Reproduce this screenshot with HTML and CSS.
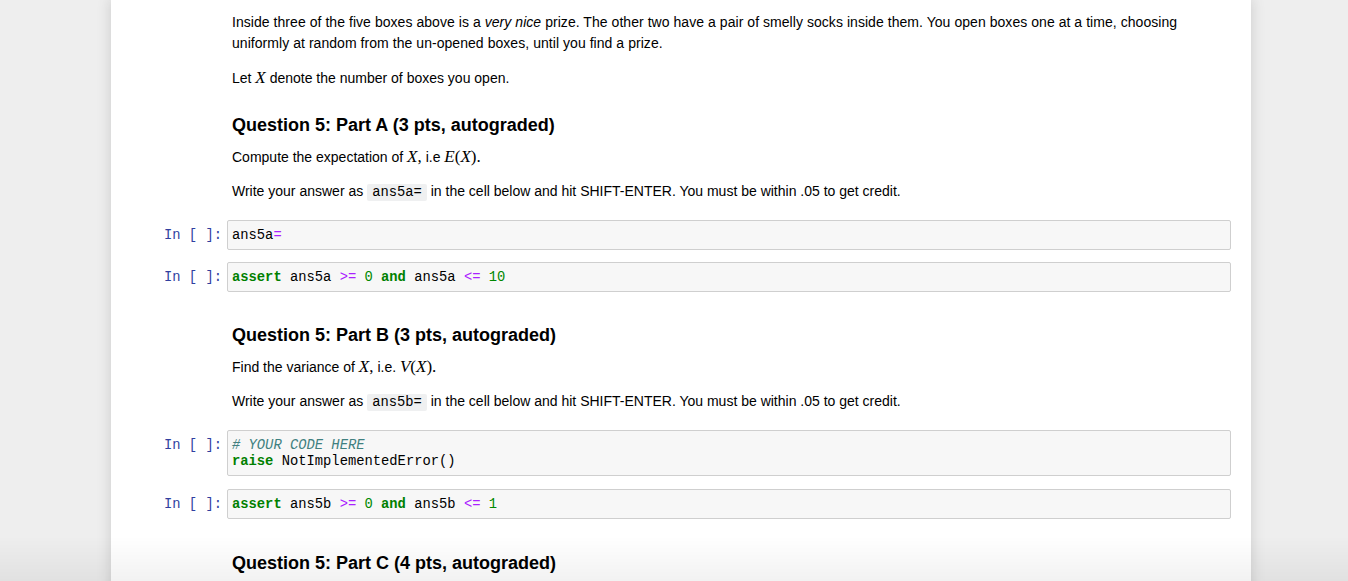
FILE: index.html
```html
<!DOCTYPE html>
<html>
<head>
<meta charset="utf-8">
<link rel="stylesheet" href="styles.css">
</head>
<body>
<div class="notebook">
  <div class="cell md first">
    <div class="prompt"></div>
    <div class="md-body">
      <p class="intro">Inside three of the five boxes above is a <em>very nice</em> prize. The other two have a pair of smelly socks inside them. You open boxes one at a time, choosing uniformly at random from the un-opened boxes, until you find a prize.</p>
      <p>Let <span class="mi">X</span> denote the number of boxes you open.</p>
    </div>
  </div>

  <div class="cell md">
    <div class="prompt"></div>
    <div class="md-body">
      <h3>Question 5: Part A (3 pts, autograded)</h3>
      <p>Compute the expectation of <span class="mi">X</span><span class="mo">,</span> i.e <span class="mi">E</span><span class="mo">(</span><span class="mi">X</span><span class="mo">).</span></p>
      <p>Write your answer as <code>ans5a=</code> in the cell below and hit SHIFT-ENTER. You must be within .05 to get credit.</p>
    </div>
  </div>

  <div class="cell code">
    <div class="prompt">In [ ]:</div>
    <div class="input"><pre>ans5a<span class="o">=</span></pre></div>
  </div>

  <div class="cell code">
    <div class="prompt">In [ ]:</div>
    <div class="input"><pre><span class="k">assert</span> ans5a <span class="o">&gt;=</span> <span class="n">0</span> <span class="k">and</span> ans5a <span class="o">&lt;=</span> <span class="n">10</span></pre></div>
  </div>

  <div class="cell md">
    <div class="prompt"></div>
    <div class="md-body">
      <h3>Question 5: Part B (3 pts, autograded)</h3>
      <p>Find the variance of <span class="mi">X</span><span class="mo">,</span> i.e. <span class="mi">V</span><span class="mo">(</span><span class="mi">X</span><span class="mo">).</span></p>
      <p>Write your answer as <code>ans5b=</code> in the cell below and hit SHIFT-ENTER. You must be within .05 to get credit.</p>
    </div>
  </div>

  <div class="cell code">
    <div class="prompt">In [ ]:</div>
    <div class="input"><pre><span class="c"># YOUR CODE HERE</span>
<span class="k">raise</span> NotImplementedError()</pre></div>
  </div>

  <div class="cell code tall-gap">
    <div class="prompt">In [ ]:</div>
    <div class="input"><pre><span class="k">assert</span> ans5b <span class="o">&gt;=</span> <span class="n">0</span> <span class="k">and</span> ans5b <span class="o">&lt;=</span> <span class="n">1</span></pre></div>
  </div>

  <div class="cell md last">
    <div class="prompt"></div>
    <div class="md-body">
      <h3>Question 5: Part C (4 pts, autograded)</h3>
    </div>
  </div>
</div>
<div class="bottom-fade"></div>
</body>
</html>
```

FILE: styles.css
```css
html, body {
  margin: 0;
  padding: 0;
  background: #eeeeee;
  height: 100%;
  overflow: hidden;
}

body {
  font-family: "Liberation Sans", Arial, sans-serif;
  font-size: 14px;
  color: #000;
}

.notebook {
  margin-left: 111px;
  width: 1100px;
  min-height: 700px;
  padding: 0 20px;
  background: #ffffff;
  box-shadow: 0 0 12px 1px rgba(87, 87, 87, 0.2);
}

.cell {
  display: flex;
  align-items: flex-start;
}

.prompt {
  flex: 0 0 96px;
  box-sizing: border-box;
  padding: 8px 5px 0 0;
  text-align: right;
  font-family: "Liberation Mono", "Courier New", monospace;
  font-size: 13.8px;
  line-height: 16px;
  color: #303f9f;
  white-space: pre;
}

.md-body {
  flex: 1;
  padding-left: 5px;
}

.md .prompt { padding: 0; }

.first .md-body { padding-top: 12px; }

.md-body p {
  margin: 0 0 14px 0;
  line-height: 20px;
}

.md-body p.intro {
  line-height: 21px;
  margin-bottom: 14px;
  letter-spacing: 0.05px;
}

.md-body p:last-child { margin-bottom: 0; }

.md-body h3 {
  margin: 0 0 11px 0;
  font-size: 18px;
  line-height: 22px;
  font-weight: bold;
}

.md-body code {
  font-family: "Liberation Mono", "Courier New", monospace;
  font-size: 13.8px;
  background: #eff0f1;
  padding: 1px 5px;
  border-radius: 2px;
}

.mi {
  font-family: "Liberation Serif", "Times New Roman", serif;
  font-style: italic;
  font-size: 17px;
}

.mo {
  font-family: "Liberation Serif", "Times New Roman", serif;
  font-size: 17px;
}

.cell.md.first + .cell.md { margin-top: 26px; }

.cell.code { margin-top: 12px; }
.cell.code.tall-gap { margin-top: 13px; }
.cell.md + .cell.code { margin-top: 17px; }
.cell.code + .cell.md { margin-top: 32px; }
.cell.code + .cell.md.last { margin-top: 33px; }

.input {
  flex: 1;
  background: #f7f7f7;
  border: 1px solid #cfcfcf;
  border-radius: 2px;
}

.input pre {
  margin: 0;
  padding: 7px 4px 5px 4px;
  font-family: "Liberation Mono", "Courier New", monospace;
  font-size: 13.8px;
  line-height: 16px;
  color: #000;
}

.k { color: #008000; font-weight: bold; }
.o { color: #aa22ff; }
.n { color: #008800; }
.c { color: #408080; font-style: italic; }

.bottom-fade {
  position: fixed;
  left: 0;
  right: 0;
  bottom: 0;
  height: 45px;
  background: linear-gradient(to bottom, rgba(0, 0, 0, 0), rgba(0, 0, 0, 0.05));
  pointer-events: none;
}
```
